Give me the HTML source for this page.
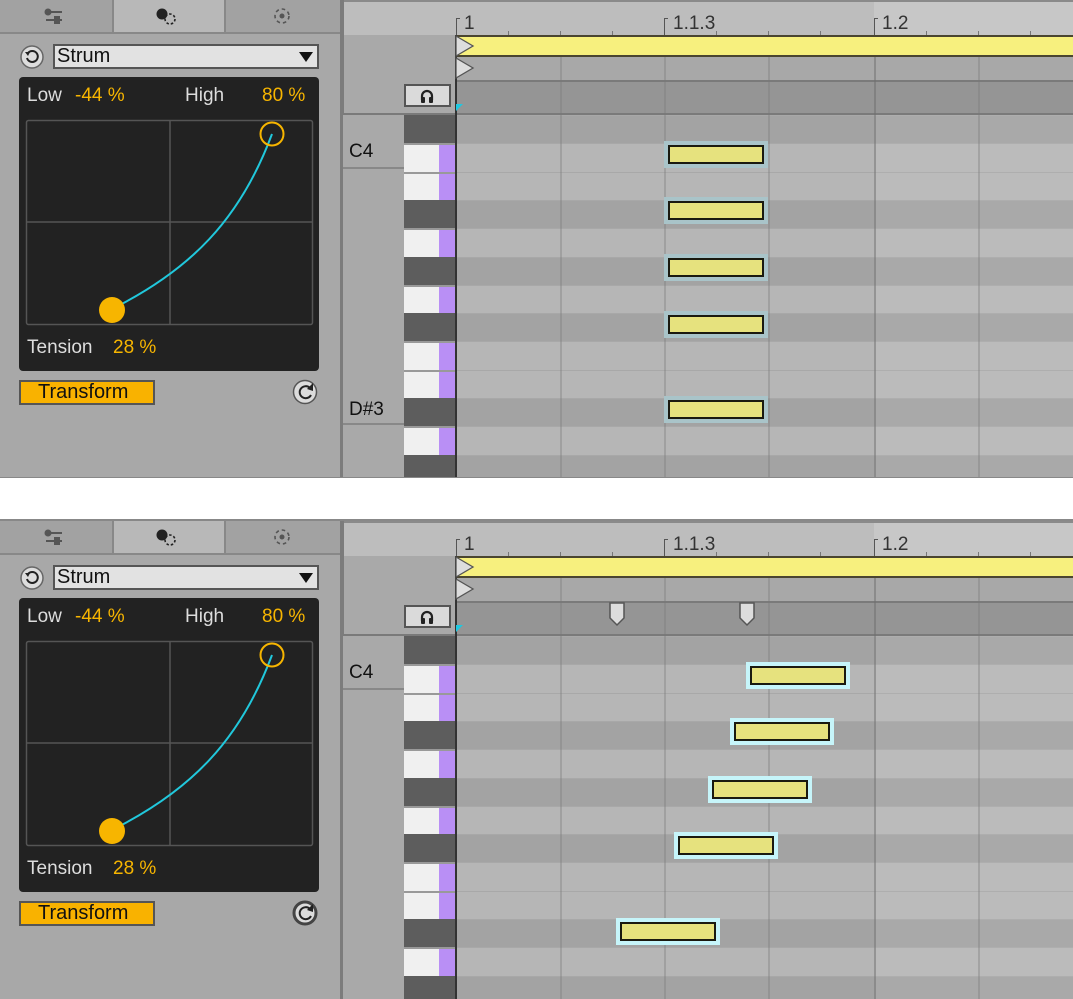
<!DOCTYPE html>
<html><head><meta charset="utf-8"><style>
*{margin:0;padding:0;box-sizing:border-box}
body{width:1073px;height:999px;background:#fff;position:relative;overflow:hidden;font-family:"Liberation Sans",sans-serif}
.a{position:absolute}
.t{position:absolute;font-size:19px;white-space:nowrap;line-height:20px}
</style></head><body>
<div id="root"></div>
<script>
function panel(oy,bottom){
 let h='';
 const A=(x,y,w,hh,st)=>h+=`<div class="a" style="left:${x}px;top:${y+oy}px;width:${w}px;height:${hh}px;${st||''}"></div>`;
 const T=(x,y,s,st)=>h+=`<div class="t" style="left:${x}px;top:${y+oy}px;${st||''}">${s}</div>`;
 A(0,0,341,478,'background:#a8a8a8');
 A(0,0,341,34,'background:#a2a2a2;border-bottom:2px solid #888');
 A(112,0,114,34,'background:#b8b8b8;border-left:2px solid #888;border-right:2px solid #888;border-bottom:2px solid #888');
 h+=`<svg class="a" style="left:0;top:${oy}px" width="341" height="34">
 <g stroke="#555" stroke-width="2" fill="#555"><line x1="46" y1="12" x2="62" y2="12"/><circle cx="48" cy="12" r="2.5"/><line x1="46" y1="20" x2="62" y2="20"/><rect x="55" y="17" width="4" height="6"/></g>
 <circle cx="162" cy="14" r="5.5" fill="#222"/><circle cx="170" cy="19" r="5" fill="none" stroke="#222" stroke-width="1.6" stroke-dasharray="2.5 2"/>
 <circle cx="282" cy="16" r="7" fill="none" stroke="#555" stroke-width="1.6" stroke-dasharray="3.5 3"/><circle cx="282" cy="16" r="2.5" fill="#555"/>
 </svg>`;
 h+=`<svg class="a" style="left:20px;top:${oy+45}px" width="24" height="24"><circle cx="12" cy="12" r="11" fill="#ddd" stroke="#666" stroke-width="1.5"/><path d="M8 8 A5.5 5.5 0 1 1 7 13" fill="none" stroke="#222" stroke-width="2"/><path d="M5 7 L10 7 L8 11Z" fill="#222"/></svg>`;
 A(53,44,266,25,'background:#e2e2e2;border:2px solid #555');
 T(57,46,'Strum','color:#111;font-size:20px');
 h+=`<svg class="a" style="left:298px;top:${oy+51}px" width="16" height="12"><path d="M1 1 L15 1 L8 11Z" fill="#111"/></svg>`;
 A(19,77,300,294,'background:#222;border-radius:4px');
 T(27,86,'Low','color:#ddd');T(75,86,'-44 %','color:#f7b500');
 T(185,86,'High','color:#ddd');T(262,86,'80 %','color:#f7b500');
 h+=`<svg class="a" style="left:0;top:${oy}px" width="341" height="420">
 <rect x="26.5" y="120.5" width="286" height="204" rx="2" fill="none" stroke="#555" stroke-width="1.5"/>
 <line x1="170" y1="121" x2="170" y2="324" stroke="#555" stroke-width="1.5"/><line x1="27" y1="222" x2="312" y2="222" stroke="#555" stroke-width="1.5"/>
 <path d="M112 309 C190 270 240 220 272 134" fill="none" stroke="#21c8dc" stroke-width="2"/>
 <circle cx="112" cy="310" r="13" fill="#f7b500"/><circle cx="272" cy="134" r="11.5" fill="none" stroke="#f7b500" stroke-width="2"/>
 <circle cx="305" cy="392" r="${bottom?11:11.5}" fill="#dcdcdc" stroke="${bottom?'#444':'#555'}" stroke-width="${bottom?3:1.5}"/>
 <path d="M310 388 A6 6 0 1 0 311 395" fill="none" stroke="#222" stroke-width="2"/><path d="M313 383 L313 391 L307 389Z" fill="#222"/>
 </svg>`;
 T(27,338,'Tension','color:#ddd');T(113,338,'28 %','color:#f7b500');
 A(19,380,136,25,'background:#f9b200;border:2px solid #555');
 T(38,382,'Transform','color:#111;font-size:20px;line-height:21px');
 A(340,0,4,478,'background:#7c7c7c');
 A(344,0,729,478,'background:#a9a9a9');
 A(344,0,729,35,'background:#bdbdbd');A(874,0,199,35,'background:#c7c7c7');
 A(344,0,729,2,'background:#8a8a8a');
 T(464,14,'1','color:#333');T(673,14,'1.1.3','color:#333');T(882,14,'1.2','color:#333');
 [456,664,874].forEach(x=>{A(x,18,1,17,'background:#555');A(x,18,4,1,'background:#555')});
 [508,560,612,716,768,820,926,978,1030].forEach(x=>A(x,31,1,4,'background:#777'));
 A(456,35,617,22,'background:#f7f07e;border-top:2px solid #4a4530;border-bottom:2px solid #4a4530');
 A(456,57,617,23,'background:#a8a8a8');
 A(456,80,617,34,'background:#959595;border-top:2px solid #7a7a7a');
 const rows=['B','W','W','B','W','B','W','B','W','W','B','W','B'];
 const y0=115,rh=28.3;
 A(343,113,730,2,'background:#7a7a7a');
 rows.forEach((r,i)=>{
  const y=Math.round(y0+i*rh),y2=Math.round(y0+(i+1)*rh),hh=Math.min(y2,478)-y;
  if(hh<=0)return;
  A(456,y,617,hh,`background:${r=='B'?'#a3a3a3':'#b6b6b6'};border-top:1px solid #a8a8a8`);
  if(r=='B')A(404,y,52,hh,'background:#5d5d5d');
  else{A(404,y,36,hh,'background:#f0f0f0;border-top:2px solid #999');A(439,y,16,hh,'background:#b98ff5;border-top:2px solid #999');}
 });
 A(874,115,199,363,'background:rgba(255,255,255,0.07)');
 [560,664,768,978].forEach(x=>A(x,57,2,421,'background:rgba(120,120,120,0.35)'));
 A(874,57,2,421,'background:rgba(110,110,110,0.5)');
 A(455,35,2,443,'background:#333');
 A(343,115,61,363,'background:#a9a9a9');
 T(349,142,'C4','color:#111');A(343,167,61,2,'background:#888');
 if(!bottom){T(349,400,'D#3','color:#111');A(343,423,61,2,'background:#888');}
 h+=`<svg class="a" style="left:455px;top:${oy+35}px" width="20" height="46"><path d="M1 1 L18 11 L1 21Z" fill="#ddd" stroke="#555" stroke-width="1.3"/><path d="M1 23 L18 33 L1 43Z" fill="#ddd" stroke="#555" stroke-width="1.3"/></svg>`;
 h+=`<svg class="a" style="left:456px;top:${oy+104}px" width="8" height="8"><path d="M0 0 L7 0 L0 7Z" fill="#1ec8e0"/></svg>`;
 A(404,84,47,23,'background:#dadada;border:2px solid #555');
 h+=`<svg class="a" style="left:418px;top:${oy+87}px" width="18" height="18"><path d="M4 13 L4 9 A5 5 0 0 1 14 9 L14 13" fill="none" stroke="#222" stroke-width="2.2"/><rect x="3" y="10" width="4" height="6" rx="1" fill="#222"/><rect x="11" y="10" width="4" height="6" rx="1" fill="#222"/></svg>`;
 let notes, glow;
 if(!bottom){notes=[[664,141],[664,197],[664,254],[664,311],[664,396]];glow='#a9c4c9';}
 else{notes=[[746,141],[730,197],[708,255],[674,311],[616,397]];glow='#c6f5fa';}
 notes.forEach(([x,y])=>{
  A(x,y,104,27,`background:${glow}`);
  A(x+4,y+4,96,19,'background:#e6e27e;border:2px solid #1a1a10');
 });
 if(bottom){
  [617,747].forEach(x=>{h+=`<svg class="a" style="left:${x-9}px;top:${oy+81}px" width="18" height="26"><path d="M2 1 L16 1 L16 16 L9 23 L2 16Z" fill="#ddd" stroke="#555" stroke-width="1.5"/></svg>`});
 }
 return h;
}
document.getElementById('root').innerHTML=panel(0,false)+panel(521,true)+'<div class="a" style="left:0;top:477px;width:1073px;height:1px;background:#888"></div><div class="a" style="left:0;top:519px;width:1073px;height:2px;background:#888"></div>';
</script>
</body></html>
